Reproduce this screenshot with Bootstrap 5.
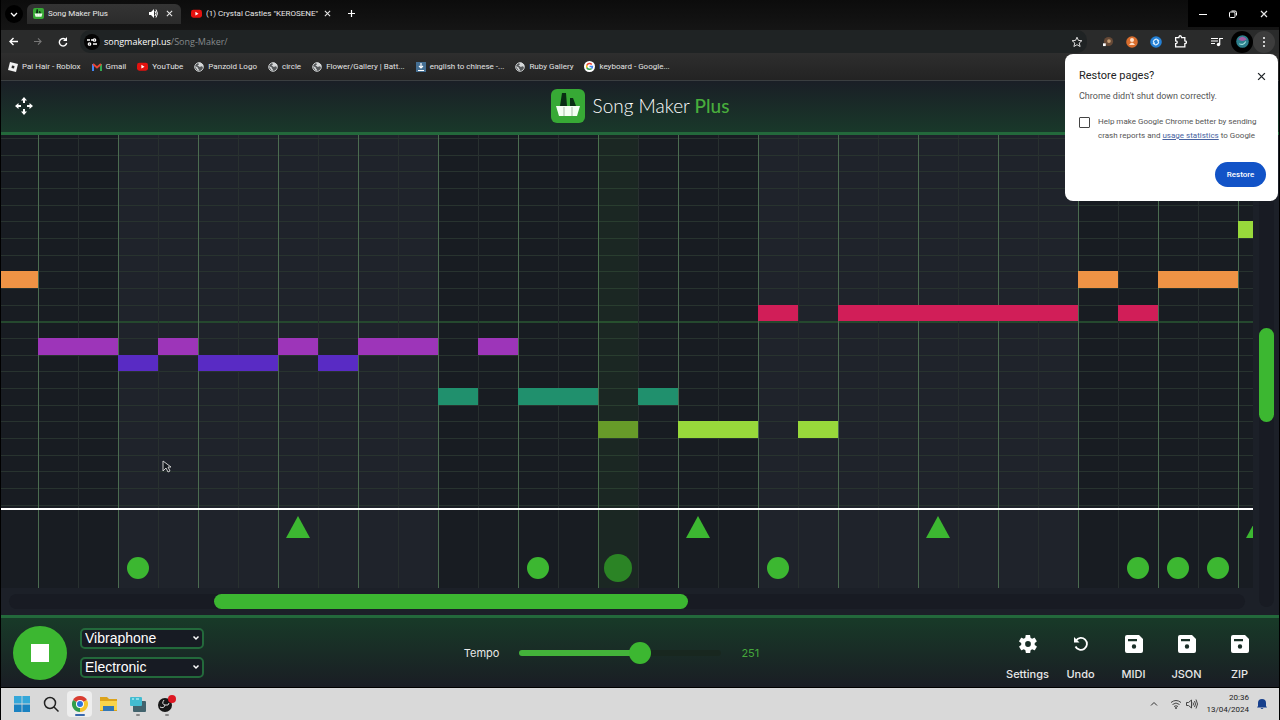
<!DOCTYPE html>
<html lang="en">
<head>
<meta charset="utf-8">
<meta name="viewport" content="width=device-width, initial-scale=1">
<title>Song Maker Plus</title>
<link rel="stylesheet" href="https://cdn.jsdelivr.net/npm/bootstrap@5.3.0/dist/css/bootstrap.min.css">
<style>
:root{--grn:#3cb731;--edge:#23693b;--ink:#181c23}
body{background:#000;color:#e8e8e8;font-family:Roboto,"Noto Sans",sans-serif;font-size:8px;line-height:12px}
button{background:none;border:0;padding:0;color:inherit}
svg{display:block;flex:none}
.window{padding:0 1px}
.tabstrip{height:30px;padding-bottom:3px;background:linear-gradient(#0c0c0c,#151515)}
.tabpick{width:18px;height:18px;background:#000}
.tab{height:20px;border-radius:6px 6px 0 0;padding:0 8px 0 6px}
.tab.current{width:154px;background:linear-gradient(#343434,#2b2b2b)}
.tab.other{width:154px}
.tab .title{overflow:hidden;white-space:nowrap}
.wincontrols{background:#000;height:27px;width:91px}
.toolbar{height:23px;background:#2a2b2b}
.omni{height:23px;background:#1f2324;border-radius:10px;font:9px/12px "Open Sans",sans-serif}
.omni .site{width:16px;height:16px;background:#050505}
.omni .path{color:#85898b}
.iconrow{color:#fff}
.extensions{gap:12px;margin-right:24px}
.avatar{width:22px;height:22px;background:#000}
.menubtn{width:22px;height:22px;background:#3d3d3d}
.bookmarks{height:28px;background:linear-gradient(#2e2e2e,#232323);border-bottom:1px solid #3a3e40;padding:0 7px;gap:11px}
.bookmarks a{color:#e3e3e3;text-decoration:none;white-space:nowrap;gap:4px}
.apphead{height:54px;padding-bottom:2px;background:linear-gradient(#1a1f26,#19382a);border-bottom:3px solid var(--edge)}
.brand{font-family:Lato,sans-serif;font-weight:300;font-size:19px;line-height:24px;color:#fff}
.brand b{font-weight:500;color:#48ad3c}
.mover{left:13px;top:15px}
.studio{min-height:0;background:#1c2028}
.roll{min-height:0;position:relative;overflow:hidden;border-bottom:2px solid #fff}
.roll svg,.drums svg{width:100%;height:100%}
.drums{height:78px}
.hbar{height:27px;padding:6px 8px}
.hbar .track{height:15px;background:#181b23;border-radius:8px;padding-left:205px}
.thumb{background:var(--grn);border-radius:8px}
.hbar .thumb{width:46%;height:15px}
.vbar{width:26px;padding:2px 5px 8px 6px}
.vbar .track{height:100%;background:#181b23;border-radius:8px;padding-top:191px}
.vbar .thumb{height:94px}
.appfoot{height:73px;background:linear-gradient(#183a28,#1a1d24);border-top:3px solid var(--edge);border-bottom:1px solid #000;font-family:Inter,sans-serif;font-size:11px;padding:0 13px 0 12px}
.stopbtn{width:54px;height:54px;background:var(--grn)}
.stopbtn span{width:18px;height:18px;background:#fff}
.picks{margin-left:13px}
.pick{appearance:none;width:124px;height:21px;border:2px solid var(--edge);border-radius:5px;color:#fff;font:14px/17px "Liberation Sans",Arial,sans-serif;padding:0 3px;background:#171b23 url("data:image/svg+xml,%3Csvg xmlns='http://www.w3.org/2000/svg' viewBox='0 0 8 8'%3E%3Cpath d='M1.500 2.500l2.500 2.500 2.500-2.500' fill='none' stroke='white' stroke-width='1.500'/%3E%3C/svg%3E") no-repeat right 2px center/8px 8px}
.tempo{padding-left:18px}
.tempo input{appearance:none;width:202px;height:22px;background:none;margin:0}
.tempo input::-webkit-slider-runnable-track{height:6px;border-radius:3px;background:linear-gradient(90deg,#43b33a 60%,#18271f 60%)}
.tempo input::-webkit-slider-thumb{appearance:none;width:22px;height:22px;margin-top:-8px;border-radius:50%;background:var(--grn)}
.tempo output{color:#45a83b}
.tool{width:53px;line-height:14px;gap:14px;font-weight:500;padding-top:10px}
.taskbar{height:32px;background:#d9d9d9;color:#222;padding:0 12px 0 8px}
.task{width:25px;height:26px;border-radius:4px}
.task.current{background:#eee}
.task.current::after,.task.running::after{content:"";position:absolute;bottom:1px;left:50%;width:10px;height:2px;margin-left:-5px;border-radius:1px;background:#3868ac}
.task.running::after{width:4px;margin-left:-2px;background:#888}
.restore{top:54px;right:2px;width:213px;height:147px;background:#fff;border-radius:8px;color:#555;padding:15px 12px 14px 14px;z-index:5;line-height:14px}
.restore h2{font-size:11px;line-height:14px;font-weight:400;color:#222;margin:0}
.restore p{font-size:9px;line-height:13px;margin:7px 0 12px}
.restore input{appearance:none;width:11px;height:11px;border:1px solid #444;border-radius:1px;margin:2px 0 0;flex:none}
.restore a{color:#4863a0}
.restore .okbtn{width:51px;height:25px;border-radius:13px;background:#1253c7;color:#fff;font-weight:500}
</style>
</head>
<body>
<svg width="0" height="0" class="position-absolute" aria-hidden="true">
 <symbol id="globe" viewBox="0 0 12 12"><circle cx="6" cy="6" r="5.200" fill="#55585a" stroke="#c4c6c7" stroke-width="1.200"/><path d="M1 5l3 1 1 2 1 1-1 2zM5 1l1 2-2 1 3 2 2-1 2 1 0-3-3-2z" fill="#d5d7d8"/></symbol>
 <symbol id="tube" viewBox="0 0 12 12"><rect y="2" width="12" height="8.500" rx="2.500" fill="#e3120f"/><path d="M4.800 4.200v4l3.400-2z" fill="#fff"/></symbol>
 <symbol id="cross" viewBox="0 0 8 8"><path d="M1 1l6 6M7 1l-6 6" stroke="currentColor" stroke-width="1.200"/></symbol>
 <symbol id="logo" viewBox="0 0 34 34"><rect width="34" height="34" rx="6" fill="#37a935"/><path d="M9 17l2-13h4l1 13zM19 17V9h3l3 8z" fill="#092e13"/><path d="M5 17h24l-3 10H8z" fill="#f4fff2"/><path d="M13 18v9M21 18v9" stroke="#a7bda6"/></symbol>
 <symbol id="save" viewBox="3 3 18 18"><path fill-rule="evenodd" d="M17 3H5a2 2 0 0 0-2 2v14a2 2 0 0 0 2 2h14a2 2 0 0 0 2-2V7zM12 16.700a2.200 2.200 0 1 1 0-4.400 2.200 2.200 0 0 1 0 4.400zM15 9.300H6V6.900h9z" fill="#fff"/></symbol>
</svg>
<div class="window d-flex flex-column vh-100 position-relative overflow-hidden">
 <header>
  <div class="tabstrip d-flex align-items-center">
   <button class="tabpick rounded-circle d-flex align-items-center justify-content-center ms-1" aria-label="Search tabs"><svg width="8" height="8" viewBox="0 0 8 8"><path d="M1 3l3 3 3-3" fill="none" stroke="#fff" stroke-width="1.300"/></svg></button>
   <div class="tab current d-flex align-items-center ms-1"><svg width="11" height="11" class="me-1"><use href="#logo"/></svg><span class="title flex-fill">Song Maker Plus</span>
    <svg width="9" height="9" viewBox="0 0 9 9" class="me-2"><path d="M0 3h2l3-3v9L2 6H0z" fill="#fff"/><path d="M6 2q2 2.500 0 5M7 .5q3 4 0 8" fill="none" stroke="#fff"/></svg>
    <button aria-label="Close tab"><svg width="7" height="7"><use href="#cross"/></svg></button></div>
   <div class="tab other d-flex align-items-center ms-1"><svg width="11" height="11" class="me-1"><use href="#tube"/></svg><span class="title flex-fill">(1) Crystal Castles "KEROSENE"</span><button aria-label="Close tab"><svg width="7" height="7"><use href="#cross"/></svg></button></div>
   <button class="ms-2" aria-label="New tab"><svg width="9" height="9" viewBox="0 0 9 9"><path d="M4.500 1v7M1 4.500h7" stroke="#fff" stroke-width="1.200"/></svg></button>
   <div class="wincontrols d-flex align-items-center justify-content-around ms-auto">
    <button aria-label="Minimize"><svg width="8" height="8" viewBox="0 0 8 8"><path d="M0 4.500h8" stroke="#fff"/></svg></button>
    <button aria-label="Restore down"><svg width="8" height="8" viewBox="0 0 8 8" fill="none" stroke="#fff"><rect x=".5" y="2" width="5.500" height="5.500" rx="1"/><path d="M2.500 1h3.500a1.500 1.500 0 0 1 1.500 1.500V5.500"/></svg></button>
    <button aria-label="Close"><svg width="8" height="8"><use href="#cross"/></svg></button>
   </div>
  </div>
  <div class="toolbar d-flex align-items-center">
   <div class="iconrow d-flex align-items-center gap-3 mx-2 pe-1">
    <button aria-label="Back"><svg width="9" height="9" viewBox="0 0 9 9" fill="none" stroke="#fff" stroke-width="1.400"><path d="M9 4.500H1M4.500 1L1 4.500 4.500 8"/></svg></button>
    <button aria-label="Forward"><svg width="8" height="9" viewBox="0 0 9 9" fill="none" stroke="#777" stroke-width="1.200"><path d="M0 4.500h8M4.500 1L8 4.500 4.500 8"/></svg></button>
    <button aria-label="Reload"><svg width="10" height="10" viewBox="0 0 10 10"><path d="M8 3a3.700 3.700 0 1 0 .7 3" fill="none" stroke="#fff" stroke-width="1.400"/><path d="M9 0v4H5z" fill="#fff"/></svg></button>
   </div>
   <div class="omni d-flex align-items-center flex-fill ps-1 me-3">
    <span class="site rounded-circle d-flex align-items-center justify-content-center me-1"><svg width="10" height="8" viewBox="0 0 10 8" stroke="#fff" stroke-width="1.300" fill="none"><path d="M0 2h3M6 6h4"/><circle cx="7.500" cy="2" r="1.200"/><path d="M4 2h2"/><circle cx="2.500" cy="6" r="1.200"/></svg></span>
    <span class="flex-fill"><span class="text-white">songmakerpl.us</span><span class="path">/Song-Maker/</span></span>
    <svg width="12" height="12" viewBox="0 0 12 12" class="me-1"><path d="M6 1.200l1.400 3.200 3.500.3-2.700 2.300.9 3.500L6 8.700l-3.100 1.800.9-3.500L1.100 4.700l3.500-.3z" fill="none" stroke="#ddd"/></svg>
   </div>
   <div class="d-flex align-items-center pe-1">
    <div class="extensions d-flex align-items-center">
     <svg width="11" height="11" viewBox="0 0 12 12"><circle cx="6" cy="6" r="5" fill="#664936"/><circle cx="6.500" cy="5.500" r="2" fill="#c39b72"/><rect y="8" width="3" height="3" fill="#fff"/></svg>
     <svg width="12" height="12" viewBox="0 0 12 12"><circle cx="6" cy="6" r="5.800" fill="#d96d2d"/><circle cx="6" cy="4" r="2" fill="#ffe0c8"/><path d="M3 9q3-5 6 0z" fill="#ffe0c8"/></svg>
     <svg width="12" height="12" viewBox="0 0 12 12"><circle cx="6" cy="6" r="5.800" fill="#2480d5"/><path d="M9 5Q7 2 4.500 4T5 7.500M3 7q2 3 4.500 1T7 4.500" fill="none" stroke="#d6ecff" stroke-width="1.200"/></svg>
     <svg width="13" height="13" viewBox="0 0 12 12"><path d="M1.500 2.500h3q0-1.800 1.200-1.800T7 2.500h3v3q1.500 0 1.500 1.200T10 8v3H1.500V8q1.500 0 1.500-1.300T1.500 5.500z" fill="none" stroke="#fff" stroke-width="1.200"/></svg>
    </div>
    <svg width="12" height="10" viewBox="0 0 12 10" class="me-2"><path d="M0 1.500h7M0 4h7M0 6.500h4" stroke="#fff" stroke-width="1.200"/><circle cx="7.500" cy="7.500" r="1.700" fill="#fff"/><path d="M8.700 7.500V1.500H12" stroke="#fff" stroke-width="1.200" fill="none"/></svg>
    <span class="avatar rounded-circle d-flex align-items-center justify-content-center"><svg width="13" height="13" viewBox="0 0 12 12"><circle cx="6" cy="6" r="5.800" fill="#2c7f8c"/><path d="M2 4q4-5 8 0-4 3-8 0z" fill="#a35ba0"/><path d="M3 8q4 2 6-2" stroke="#9adfda" fill="none"/></svg></span>
    <button class="menubtn rounded-circle d-flex align-items-center justify-content-center" aria-label="Menu"><svg width="4" height="12" viewBox="0 0 4 12" fill="#fff"><circle cx="2" cy="2" r="1"/><circle cx="2" cy="6" r="1"/><circle cx="2" cy="10" r="1"/></svg></button>
   </div>
  </div>
  <nav class="bookmarks d-flex align-items-center" aria-label="Bookmarks">
   <a href="#" class="d-flex align-items-center"><svg width="10" height="10" viewBox="0 0 10 10"><path d="M2 0l8 2-2 8-8-2z" fill="#f2f2f2"/><path d="M4 3.500l2.500.6L6 6.500l-2.500-.6z" fill="#2a2a2a"/></svg>Pal Hair - Roblox</a>
   <a href="#" class="d-flex align-items-center"><svg width="10" height="10" viewBox="0 0 10 10" fill="none" stroke-width="2"><path d="M1 9V2" stroke="#4285f4"/><path d="M9 9V2" stroke="#34a853"/><path d="M1 2l4 3.500L9 2" stroke="#ea4335"/></svg>Gmail</a>
   <a href="#" class="d-flex align-items-center"><svg width="11" height="11"><use href="#tube"/></svg>YouTube</a>
   <a href="#" class="d-flex align-items-center"><svg width="10" height="10"><use href="#globe"/></svg>Panzoid Logo</a>
   <a href="#" class="d-flex align-items-center"><svg width="10" height="10"><use href="#globe"/></svg>circle</a>
   <a href="#" class="d-flex align-items-center"><svg width="10" height="10"><use href="#globe"/></svg>Flower/Gallery | Batt...</a>
   <a href="#" class="d-flex align-items-center"><svg width="10" height="10" viewBox="0 0 10 10"><rect width="10" height="10" fill="#456f93"/><path d="M5 1v5M3 4l2 2 2-2M2 8.500h6" stroke="#fff" fill="none" stroke-width="1.200"/></svg>english to chinese -...</a>
   <a href="#" class="d-flex align-items-center"><svg width="10" height="10"><use href="#globe"/></svg>Ruby Gallery</a>
   <a href="#" class="d-flex align-items-center"><svg width="11" height="11" viewBox="0 0 12 12" fill="none" stroke-width="1.600"><circle cx="6" cy="6" r="6" fill="#fff"/><path d="M8.500 3.800A3.300 3.300 0 0 0 3 4.800" stroke="#ea4335"/><path d="M3 4.700v2.600" stroke="#fbbc05"/><path d="M3 7.200a3.300 3.300 0 0 0 5.300.9" stroke="#34a853"/><path d="M6 6h3.200q0 1.400-.9 2.200" stroke="#4285f4"/></svg>keyboard - Google...</a>
  </nav>
 </header>

 <div class="apphead d-flex align-items-center justify-content-center position-relative">
  <button class="mover position-absolute" aria-label="Move"><svg width="20" height="20" viewBox="0 0 20 20" fill="#fff"><g id="arm"><path d="M10 1l3 3.500H11V7H9V4.500H7z"/></g><use href="#arm" transform="rotate(90 10 10)"/><use href="#arm" transform="rotate(180 10 10)"/><use href="#arm" transform="rotate(270 10 10)"/></svg></button>
  <svg width="34" height="34"><use href="#logo"/></svg>
  <span class="brand ms-2">Song Maker <b>Plus</b></span>
 </div>

 <main class="studio d-flex flex-fill">
  <div class="d-flex flex-column flex-fill overflow-hidden">
   <div class="roll flex-fill"><svg id="roll" class="position-absolute" role="img" aria-label="Melody grid"></svg></div>
   <div class="drums"><svg id="drums" role="img" aria-label="Percussion grid"></svg></div>
   <div class="hbar"><div class="track"><div class="thumb"></div></div></div>
  </div>
  <div class="vbar"><div class="track"><div class="thumb"></div></div></div>
 </main>

 <footer class="appfoot d-flex align-items-center">
  <button class="stopbtn rounded-circle d-flex align-items-center justify-content-center" aria-label="Stop"><span></span></button>
  <div class="picks d-flex flex-column gap-2">
   <select class="pick" aria-label="Instrument"><option>Vibraphone</option></select>
   <select class="pick" aria-label="Percussion"><option>Electronic</option></select>
  </div>
  <div class="tempo d-flex align-items-center justify-content-center flex-fill">
   <label for="tempo" class="me-3 pe-1">Tempo</label><input id="tempo" type="range" min="0" max="411" value="251"><output for="tempo" class="ms-3 ps-1">251</output>
  </div>
  <button class="tool d-flex flex-column align-items-center"><svg width="18" height="18" viewBox="2 2 20 20"><path d="M19.400 13c0-.3.100-.6.100-1s0-.7-.1-1l2.100-1.600c.2-.2.200-.4.100-.6l-2-3.500c-.1-.2-.4-.3-.6-.2l-2.500 1a7 7 0 0 0-1.700-1l-.4-2.600c0-.3-.2-.5-.5-.5h-4c-.3 0-.5.200-.5.400l-.4 2.700c-.6.200-1.100.6-1.700 1l-2.500-1c-.2-.1-.5 0-.6.200l-2 3.500c-.1.200-.1.500.1.600L4.500 11a8 8 0 0 0 0 2l-2.100 1.600c-.2.200-.2.400-.1.600l2 3.500c.1.200.4.300.6.200l2.500-1c.5.400 1.100.7 1.700 1l.4 2.600c0 .3.200.5.500.5h4c.3 0 .5-.2.500-.4l.4-2.700c.6-.2 1.100-.6 1.700-1l2.500 1c.2.100.5 0 .6-.2l2-3.500c.1-.2.1-.5-.1-.6zM12 15.200a3.200 3.200 0 1 1 0-6.400 3.200 3.200 0 0 1 0 6.400z" fill="#fff"/></svg>Settings</button>
  <button class="tool d-flex flex-column align-items-center"><svg width="18" height="18" viewBox="0 0 18 18"><path d="M4 5.500a6 6 0 1 1-.5 6" fill="none" stroke="#fff" stroke-width="1.800"/><path d="M2 2v5.500h5.500z" fill="#fff"/></svg>Undo</button>
  <button class="tool d-flex flex-column align-items-center"><svg width="18" height="18"><use href="#save"/></svg>MIDI</button>
  <button class="tool d-flex flex-column align-items-center"><svg width="18" height="18"><use href="#save"/></svg>JSON</button>
  <button class="tool d-flex flex-column align-items-center"><svg width="18" height="18"><use href="#save"/></svg>ZIP</button>
 </footer>

 <div class="taskbar d-flex align-items-center">
  <div class="d-flex align-items-center gap-1">
   <button class="task d-flex align-items-center justify-content-center" aria-label="Start"><svg width="16" height="16" viewBox="0 0 16 16"><path d="M0 0h7.600v7.600H0zM8.400 0H16v7.600H8.400z" fill="#35a7d9"/><path d="M0 8.400h7.600V16H0zM8.400 8.400H16V16H8.400z" fill="#1a82c1"/></svg></button>
   <button class="task d-flex align-items-center justify-content-center" aria-label="Search"><svg width="16" height="16" viewBox="0 0 16 16" fill="none" stroke="#222" stroke-width="1.500"><circle cx="7" cy="7" r="5.500"/><path d="M11 11l4.500 4.500"/></svg></button>
   <button class="task current position-relative d-flex align-items-center justify-content-center" aria-label="Chrome"><svg width="16" height="16" viewBox="0 0 16 16"><path d="M8 8L1.070 4A8 8 0 0 1 14.930 4z" fill="#d93c30"/><path d="M8 8L14.930 4A8 8 0 0 1 8 16z" fill="#f5c52c"/><path d="M8 8v8A8 8 0 0 1 1.070 4z" fill="#319e4b"/><circle cx="8" cy="8" r="4" fill="#fff"/><circle cx="8" cy="8" r="3" fill="#2d74dc"/></svg></button>
   <button class="task d-flex align-items-center justify-content-center" aria-label="Files"><svg width="17" height="16" viewBox="0 0 17 16"><path d="M0 1h7l2 2h8v12H0z" fill="#dca31b"/><path d="M0 5h17v9H0z" fill="#f9d44b"/><path d="M3 10h11v5H3z" fill="#3277b5"/></svg></button>
   <button class="task running position-relative d-flex align-items-center justify-content-center" aria-label="Remote"><svg width="16" height="15" viewBox="0 0 16 15"><rect x="3" y="4" width="13" height="11" rx="1" fill="#42636d"/><rect width="12" height="9" rx="1" fill="#42bcd1"/><path d="M2 2h2M6 2h3" stroke="#d6ffff"/></svg></button>
   <button class="task running position-relative d-flex align-items-center justify-content-center" aria-label="OBS Studio"><svg width="20" height="18" viewBox="0 0 20 18"><circle cx="8" cy="10" r="7" fill="#171717"/><path d="M7 5q-3 4 1 5 4 1 4-2M8 10q-1 4-5 2" fill="none" stroke="#ddd"/><circle cx="15" cy="4" r="4" fill="#dd1823"/></svg></button>
  </div>
  <div class="d-flex align-items-center ms-auto gap-2">
   <svg width="8" height="8" viewBox="0 0 8 8" class="me-1"><path d="M1 5.500l3-3 3 3" fill="none" stroke="#333"/></svg>
   <div class="d-flex gap-1"><svg width="12" height="12" viewBox="0 0 12 12" fill="none" stroke="#444"><path d="M1 4.500q5-4 10 0M2.500 6.500q3.500-3 7 0M4 8.500q2-1.500 4 0"/><circle cx="6" cy="10" r=".7"/></svg>
   <svg width="12" height="12" viewBox="0 0 12 12" fill="none" stroke="#444"><path d="M.5 4.500h2l3-2.500v8l-3-2.500h-2zM7 4.500q1 1.500 0 3M8.500 3q2 3 0 6M10 1.500q3 4.500 0 9"/></svg></div>
   <div class="text-end">20:36<br>13/04/2024</div>
   <svg width="10" height="12" viewBox="0 0 10 12" fill="#163f8c"><path d="M1 8V5q0-4 4-4t4 4v3l1 1.500H0zM3.500 10h3q-1.500 2-3 0z"/></svg>
  </div>
 </div>

 <section class="restore position-absolute d-flex flex-column" role="dialog" aria-labelledby="rtitle">
  <div class="d-flex justify-content-between align-items-center"><h2 id="rtitle">Restore pages?</h2><button class="text-dark" aria-label="Dismiss"><svg width="9" height="9"><use href="#cross"/></svg></button></div>
  <p>Chrome didn't shut down correctly.</p>
  <div class="d-flex gap-2"><input id="stats" type="checkbox"><label for="stats"><span class="d-block">Help make Google Chrome better by sending</span><span>crash reports and</span> <a href="#">usage statistics</a> <span>to Google</span></label></div>
  <button class="okbtn mt-auto ms-auto">Restore</button>
 </section>
</div>
<script src="https://cdn.jsdelivr.net/npm/bootstrap@5.3.0/dist/js/bootstrap.bundle.min.js"></script>
<script>
const STEP = 40, FIRST = 37, ROWS = 22, STEPS = 32;
const rowY = r => Math.round(3 + r * 50 / 3);
const rect = (x, y, w, h, fill) => `<rect x="${x}" y="${y}" width="${w}" height="${h}" fill="${fill}"/>`;
const stepX = s => FIRST + s * STEP;

// Bars alternate in shade every eight steps; every second step has a stronger line.
function backdrop(height) {
  let out = rect(0, 0, '100%', height, '#181c22');
  out += rect(stepX(2), 0, 320, height, '#1f232b') + rect(stepX(18), 0, 320, height, '#1f232b');
  return out;
}
function stepLines(height) {
  let out = '';
  for (let s = 0; s <= STEPS; s++) out += rect(stepX(s), 0, 1, height, s % 2 ? '#28302f' : '#4b6b50');
  return out;
}
// [row, first step, length, colour]
const notes = [
  [8, -1, 1, '#ef9345'], [12, 0, 2, '#9d35b9'], [13, 2, 1, '#592bc4'], [12, 3, 1, '#9d35b9'],
  [13, 4, 2, '#592bc4'], [12, 6, 1, '#9d35b9'], [13, 7, 1, '#592bc4'], [12, 8, 2, '#9d35b9'],
  [15, 10, 1, '#20906d'], [12, 11, 1, '#9d35b9'], [15, 12, 2, '#20906d'], [17, 14, 1, '#98d93b'],
  [15, 15, 1, '#20906d'], [17, 16, 2, '#98d93b'], [10, 18, 1, '#d11e58'], [17, 19, 1, '#98d93b'],
  [10, 20, 6, '#d11e58'], [8, 26, 1, '#ef9345'], [10, 27, 1, '#d11e58'], [8, 28, 2, '#ef9345'], [5, 30, 2, '#98d93b']
];
let roll = backdrop('100%');
for (let r = 0; r <= ROWS; r++) roll += r === 11 ? rect(0, rowY(r), '100%', 2, '#25482e') : rect(0, rowY(r), '100%', 1, '#28332f');
roll += stepLines('100%');
for (const [r, s, n, c] of notes) {
  const active = s === 14;
  roll += rect(stepX(s), rowY(r), n * STEP, rowY(r + 1) - rowY(r), active ? '#6b9929' : c);
}
roll += `<rect x="${stepX(14)}" width="40" height="100%" fill="#3cb731" fill-opacity=".08"/>`;
roll += '<path d="M162 326v10l3-3 2 4 2-1-2-4h3z" fill="#15191e" stroke="#ccc"/>';
document.getElementById('roll').innerHTML = roll;

let drums = backdrop('100%') + stepLines('100%');
drums += `<rect x="${stepX(14)}" width="40" height="100%" fill="#3cb731" fill-opacity=".08"/>`;
for (const s of [6, 16, 22, 30]) { const x = stepX(s) + 20; drums += `<path d="M${x} 6l12 22h-24z" fill="#3cb731"/>`; }
for (const s of [2, 12, 14, 18, 27, 28, 29]) drums += `<circle cx="${stepX(s) + 20}" cy="58" r="${s === 14 ? 14 : 11}" fill="${s === 14 ? '#2b8425' : '#3cb731'}"/>`;
document.getElementById('drums').innerHTML = drums;
</script>
</body>
</html>
